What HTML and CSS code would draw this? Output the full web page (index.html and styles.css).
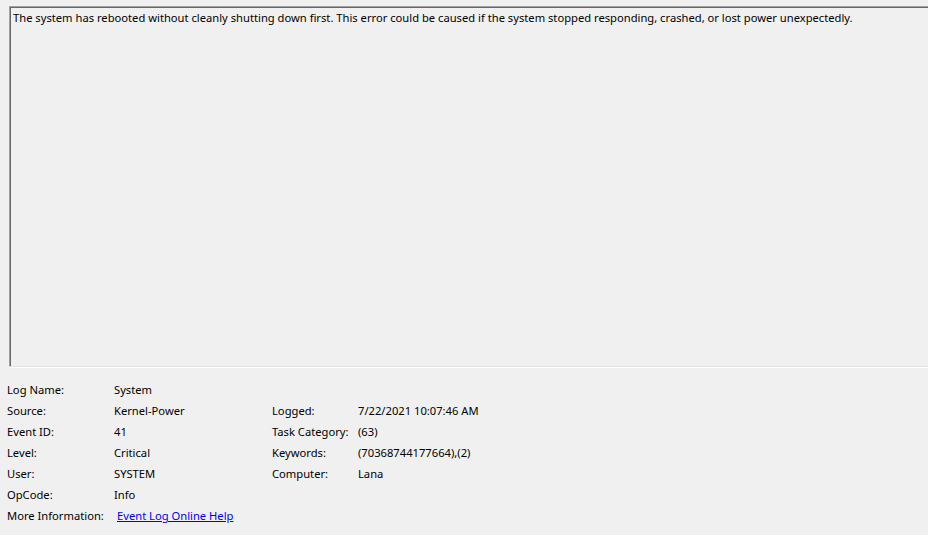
FILE: index.html
```html
<!DOCTYPE html>
<html>
<head>
<meta charset="utf-8">
<link rel="stylesheet" href="styles.css">
</head>
<body>
<div class="desc">
  <div class="desc-text">The system has rebooted without cleanly shutting down first. This error could be caused if the system stopped responding, crashed, or lost power unexpectedly.</div>
</div>
<div class="details">
  <div class="lbl">Log Name:</div><div class="val">System</div><div></div><div></div>
  <div class="lbl">Source:</div><div class="val">Kernel-Power</div><div class="lbl">Logged:</div><div class="val">7/22/2021 10:07:46 AM</div>
  <div class="lbl">Event ID:</div><div class="val">41</div><div class="lbl">Task Category:</div><div class="val">(63)</div>
  <div class="lbl">Level:</div><div class="val">Critical</div><div class="lbl">Keywords:</div><div class="val">(70368744177664),(2)</div>
  <div class="lbl">User:</div><div class="val">SYSTEM</div><div class="lbl">Computer:</div><div class="val">Lana</div>
  <div class="lbl">OpCode:</div><div class="val">Info</div><div></div><div></div>
  <div class="lbl">More Information:</div><div class="val"><a class="link" href="#">Event Log Online Help</a></div><div></div><div></div>
</div>
</body>
</html>
```
FILE: styles.css
```css
html, body {
  margin: 0;
  padding: 0;
  background: #f0f0f0;
  font-family: "Noto Sans", "Open Sans", sans-serif;
  font-size: 11.2px;
  color: #000;
}
body {
  width: 928px;
  height: 535px;
  overflow: hidden;
}
.desc {
  margin: 6px 0 0 9px;
  border-top: 1px solid #a0a0a0;
  border-left: 1px solid #a0a0a0;
  box-shadow: inset 1px 1px 0 #696969, 0 1px 0 #ffffff;
  border-bottom: 1px solid #e3e3e3;
  padding: 3px 0 0 3px;
  box-sizing: border-box;
  height: 361px;
}
.desc-text {
  line-height: 16px;
  white-space: nowrap;
}
.details {
  margin: 12px 0 0 7px;
  display: grid;
  grid-template-columns: 107px 158px 86px auto;
  grid-auto-rows: 21px;
  align-items: center;
}
.lbl, .val {
  line-height: 21px;
  white-space: nowrap;
}
.link {
  color: #0000ff;
  text-decoration: underline;
  margin-left: 3px;
}
```
